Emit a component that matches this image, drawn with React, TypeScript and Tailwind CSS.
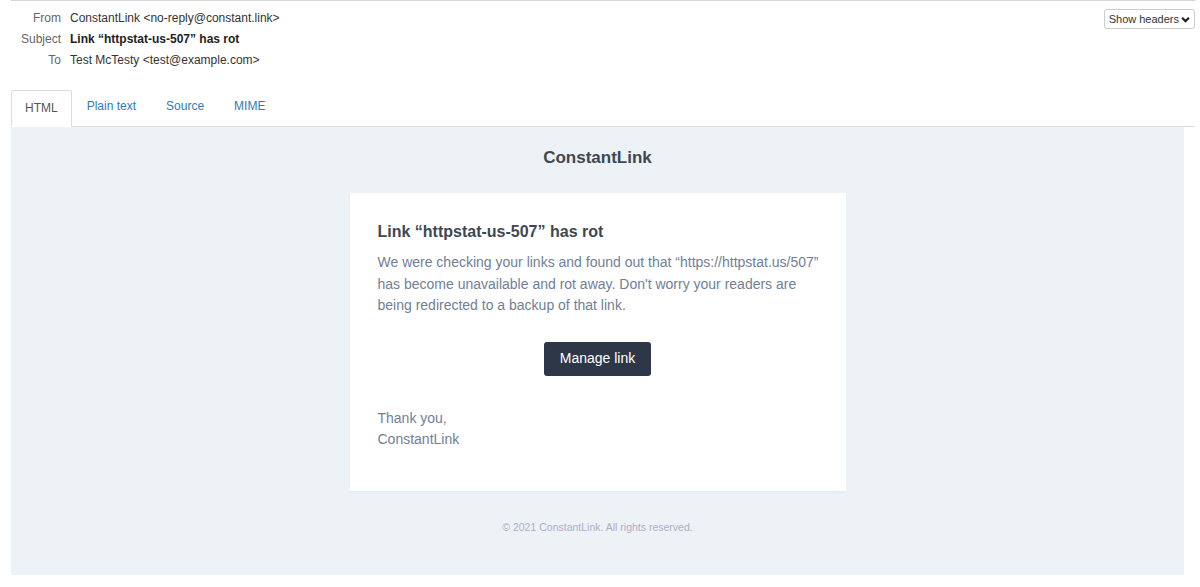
import React from 'react';

const headers = [
  { label: 'From', value: 'ConstantLink <no-reply@constant.link>', bold: false },
  { label: 'Subject', value: 'Link “httpstat-us-507” has rot', bold: true },
  { label: 'To', value: 'Test McTesty <test@example.com>', bold: false },
];

const tabs = ['HTML', 'Plain text', 'Source', 'MIME'];

export default function App() {
  return (
    <div className="h-[587px] bg-white font-['Liberation_Sans',Arial,sans-serif] text-[#333]">
      <div className="ml-[11px] mr-[5px] border-t border-[#d4d4d4]">
        <div className="flex justify-between pt-[7px]">
          <table className="text-[12px] leading-[21px]">
            <tbody>
              {headers.map(h => (
                <tr key={h.label}>
                  <td className="w-[59px] pr-[9px] text-right text-[#666]">{h.label}</td>
                  <td className={h.bold ? 'font-bold text-[#222]' : 'text-[#333]'}>{h.value}</td>
                </tr>
              ))}
            </tbody>
          </table>
          <div className="pt-[1px]">
            <button className="flex h-[20px] items-center gap-[2px] rounded-[3px] border border-[#ccc] bg-white px-[4px] text-[11px] text-[#333]">
              Show headers
              <svg width="9" height="9" viewBox="0 0 10 10">
                <path d="M1.2 3 L5 6.8 L8.8 3" fill="none" stroke="#222" strokeWidth="2.4" />
              </svg>
            </button>
          </div>
        </div>

        <div className="mt-[19px] flex border-b border-[#ddd] text-[12px]">
          {tabs.map((t, i) => (
            <div
              key={t}
              className={
                i === 0
                  ? '-mb-px flex h-[37px] items-center rounded-t-[3px] border border-b-white border-[#ddd] bg-white px-[13px] pb-[2px] text-[#555]'
                  : 'flex h-[36px] items-center px-[15px] pb-[4px] text-[#337ab7]'
              }
            >
              {t}
            </div>
          ))}
        </div>
      </div>

      <div className="ml-[11px] flex h-[448px] w-[1173px] flex-col items-center bg-[#edf2f7]">
        <div className="pt-[21px] text-[17px] font-bold leading-[20px] text-[#3d4852]">ConstantLink</div>
        <div className="mt-[25px] h-[298px] w-[496px] bg-white px-[28px] pt-[27px] shadow-[0_2px_2px_rgba(0,0,150,0.03)]">
          <div className="text-[16px] font-bold leading-[24px] text-[#3d4852]">
            Link “httpstat-us-507” has rot
          </div>
          <p className="mt-[8px] whitespace-nowrap text-[14px] leading-[21.5px] text-[#718096]">
            We were checking your links and found out that “https://httpstat.us/507”
            <br />
            has become unavailable and rot away. Don't worry your readers are
            <br />
            being redirected to a backup of that link.
          </p>
          <div className="mt-[25px] flex justify-center">
            <div className="flex h-[34px] items-center rounded-[3px] bg-[#2d3748] px-[16px] text-[14px] text-white">
              Manage link
            </div>
          </div>
          <div className="mt-[32px] text-[14px] leading-[21px] text-[#718096]">
            <div>Thank you,</div>
            <div>ConstantLink</div>
          </div>
        </div>
        <div className="mt-[29px] text-[10.5px] text-[#b0adc5]">© 2021 ConstantLink. All rights reserved.</div>
      </div>
    </div>
  );
}
